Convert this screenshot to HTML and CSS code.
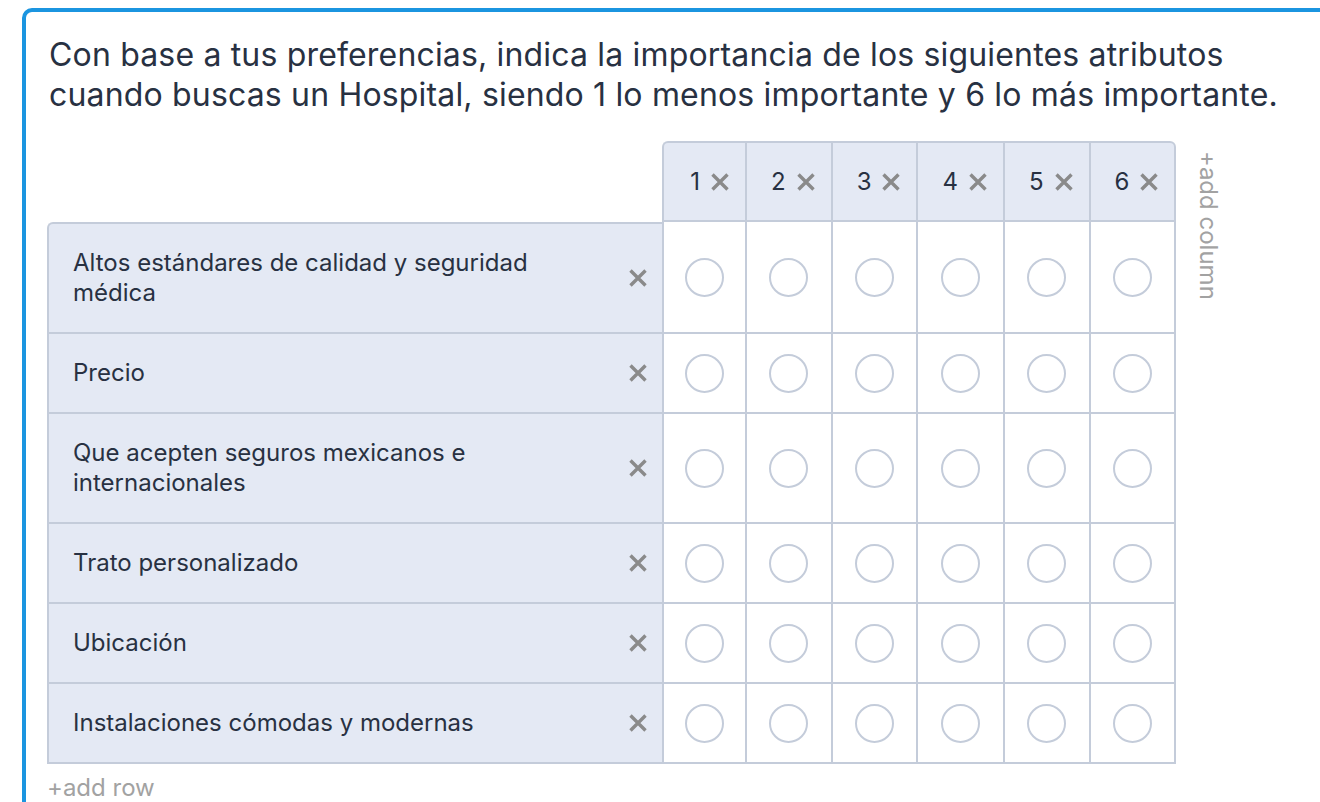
FILE: index.html
```html
<!DOCTYPE html>
<html lang="es">
<head>
    <meta charset="UTF-8">
    <meta name="viewport" content="width=device-width, initial-scale=1.0">
    <title>Matriz de importancia</title>
    <link rel="stylesheet" href="styles.css">
</head>

<body>
    <div class="card">
        <h1 class="question">Con base a tus preferencias, indica la importancia de los siguientes atributos cuando buscas un Hospital, siendo 1 lo menos importante y 6 lo más importante.</h1>

        <div class="matrix-wrap">
            <div class="matrix-block">
                <table class="matrix">
                    <thead>
                        <tr>
                            <th class="corner"></th>
                            <th class="col-head"><div class="col-title"><span>1</span><svg class="remove" viewBox="0 0 18 18"><path d="M1.5 1.5 L16.5 16.5 M16.5 1.5 L1.5 16.5"/></svg></div></th>
                            <th class="col-head"><div class="col-title"><span>2</span><svg class="remove" viewBox="0 0 18 18"><path d="M1.5 1.5 L16.5 16.5 M16.5 1.5 L1.5 16.5"/></svg></div></th>
                            <th class="col-head"><div class="col-title"><span>3</span><svg class="remove" viewBox="0 0 18 18"><path d="M1.5 1.5 L16.5 16.5 M16.5 1.5 L1.5 16.5"/></svg></div></th>
                            <th class="col-head"><div class="col-title"><span>4</span><svg class="remove" viewBox="0 0 18 18"><path d="M1.5 1.5 L16.5 16.5 M16.5 1.5 L1.5 16.5"/></svg></div></th>
                            <th class="col-head"><div class="col-title"><span>5</span><svg class="remove" viewBox="0 0 18 18"><path d="M1.5 1.5 L16.5 16.5 M16.5 1.5 L1.5 16.5"/></svg></div></th>
                            <th class="col-head"><div class="col-title"><span>6</span><svg class="remove" viewBox="0 0 18 18"><path d="M1.5 1.5 L16.5 16.5 M16.5 1.5 L1.5 16.5"/></svg></div></th>
                        </tr>
                    </thead>
                    <tbody>
                        <tr>
                            <th class="row-head">
                                <div class="row-label"><span>Altos estándares de calidad y seguridad médica</span><svg class="remove" viewBox="0 0 18 18"><path d="M1.5 1.5 L16.5 16.5 M16.5 1.5 L1.5 16.5"/></svg></div>
                            </th>
                            <td><span class="radio"></span></td>
                            <td><span class="radio"></span></td>
                            <td><span class="radio"></span></td>
                            <td><span class="radio"></span></td>
                            <td><span class="radio"></span></td>
                            <td><span class="radio"></span></td>
                        </tr>
                        <tr>
                            <th class="row-head">
                                <div class="row-label"><span>Precio</span><svg class="remove" viewBox="0 0 18 18"><path d="M1.5 1.5 L16.5 16.5 M16.5 1.5 L1.5 16.5"/></svg></div>
                            </th>
                            <td><span class="radio"></span></td>
                            <td><span class="radio"></span></td>
                            <td><span class="radio"></span></td>
                            <td><span class="radio"></span></td>
                            <td><span class="radio"></span></td>
                            <td><span class="radio"></span></td>
                        </tr>
                        <tr>
                            <th class="row-head">
                                <div class="row-label"><span>Que acepten seguros mexicanos e internacionales</span><svg class="remove" viewBox="0 0 18 18"><path d="M1.5 1.5 L16.5 16.5 M16.5 1.5 L1.5 16.5"/></svg></div>
                            </th>
                            <td><span class="radio"></span></td>
                            <td><span class="radio"></span></td>
                            <td><span class="radio"></span></td>
                            <td><span class="radio"></span></td>
                            <td><span class="radio"></span></td>
                            <td><span class="radio"></span></td>
                        </tr>
                        <tr>
                            <th class="row-head">
                                <div class="row-label"><span>Trato personalizado</span><svg class="remove" viewBox="0 0 18 18"><path d="M1.5 1.5 L16.5 16.5 M16.5 1.5 L1.5 16.5"/></svg></div>
                            </th>
                            <td><span class="radio"></span></td>
                            <td><span class="radio"></span></td>
                            <td><span class="radio"></span></td>
                            <td><span class="radio"></span></td>
                            <td><span class="radio"></span></td>
                            <td><span class="radio"></span></td>
                        </tr>
                        <tr>
                            <th class="row-head">
                                <div class="row-label"><span>Ubicación</span><svg class="remove" viewBox="0 0 18 18"><path d="M1.5 1.5 L16.5 16.5 M16.5 1.5 L1.5 16.5"/></svg></div>
                            </th>
                            <td><span class="radio"></span></td>
                            <td><span class="radio"></span></td>
                            <td><span class="radio"></span></td>
                            <td><span class="radio"></span></td>
                            <td><span class="radio"></span></td>
                            <td><span class="radio"></span></td>
                        </tr>
                        <tr>
                            <th class="row-head">
                                <div class="row-label"><span>Instalaciones cómodas y modernas</span><svg class="remove" viewBox="0 0 18 18"><path d="M1.5 1.5 L16.5 16.5 M16.5 1.5 L1.5 16.5"/></svg></div>
                            </th>
                            <td><span class="radio"></span></td>
                            <td><span class="radio"></span></td>
                            <td><span class="radio"></span></td>
                            <td><span class="radio"></span></td>
                            <td><span class="radio"></span></td>
                            <td><span class="radio"></span></td>
                        </tr>
                    </tbody>
                </table>
                <div class="add-row">+add row</div>
            </div>
            <div class="add-col">+add column</div>
        </div>
    </div>
</body>
</html>
```

FILE: styles.css
```css
/* Page */
body {
    margin: 0;
    overflow: hidden;
    background-color: #ffffff;
    font-family: Inter, 'Noto Sans', sans-serif;
    color: #283142;
}

/* Question card */
.card {
    margin: 8px 0 0 22px;
    width: 1330px;
    height: 820px;
    border: 4px solid #1b95e0;
    border-radius: 10px;
    padding: 23px 0 0 21px;
    box-sizing: border-box;
    overflow: hidden;
}

.question {
    margin: 0 0 26px 2px;
    width: 1250px;
    font-size: 32px;
    font-weight: 400;
    line-height: 40px;
    letter-spacing: 0.17px;
    color: #283142;
}

/* Matrix */
.matrix-wrap {
    display: flex;
    align-items: flex-start;
}

.matrix {
    border-collapse: separate;
    border-spacing: 0;
    font-size: 24px;
    line-height: 30px;
}

.matrix th,
.matrix td {
    padding: 0;
    font-weight: 400;
}

.corner {
    background: none;
}

.col-head {
    background-color: #e4e9f4;
    border-top: 2px solid #c4ccda;
    border-left: 2px solid #c4ccda;
    border-bottom: 2px solid #c4ccda;
    padding: 24px 16px 23px 24px !important;
    white-space: nowrap;
}

.col-head:nth-child(2) {
    border-top-left-radius: 6px;
}

.col-head:last-child {
    border-right: 2px solid #c4ccda;
    border-top-right-radius: 6px;
}

.col-title {
    display: flex;
    align-items: center;
    justify-content: flex-end;
    gap: 11px;
    min-width: 41px;
    height: 30px;
}

.remove {
    width: 18px;
    height: 18px;
    flex-shrink: 0;
}

.remove path {
    stroke: #8a8a8a;
    stroke-width: 3.4;
    fill: none;
}

.row-head {
    background-color: #e4e9f4;
    border-left: 2px solid #c4ccda;
    border-bottom: 2px solid #c4ccda;
    text-align: left;
}

tbody tr:first-child .row-head {
    border-top: 2px solid #c4ccda;
    border-top-left-radius: 6px;
}

.row-label {
    width: 613px;
    box-sizing: border-box;
    display: flex;
    align-items: center;
    gap: 24px;
    padding: 24px 15px 24px 24px;
}

.row-label span {
    flex: 1;
}

.matrix td {
    border-left: 2px solid #c4ccda;
    border-bottom: 2px solid #c4ccda;
    text-align: center;
    vertical-align: middle;
}

.matrix td:last-child {
    border-right: 2px solid #c4ccda;
}

.radio {
    display: inline-block;
    width: 35px;
    height: 35px;
    border: 2px solid #c4ccda;
    border-radius: 50%;
    vertical-align: middle;
}

/* Add links */
.add-row {
    margin-top: 9px;
    font-size: 24px;
    line-height: 30px;
    color: #a2a2a2;
}

.add-col {
    writing-mode: vertical-rl;
    margin: 10px 0 0 20px;
    font-size: 24px;
    line-height: 24px;
    color: #a2a2a2;
}
```
